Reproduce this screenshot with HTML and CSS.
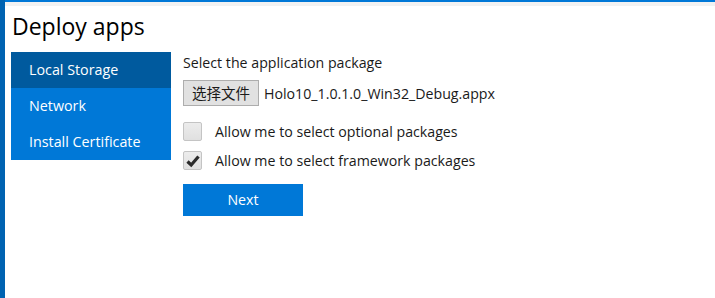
FILE: index.html
```html
<!DOCTYPE html>
<html>
<head>
<meta charset="utf-8">
<link rel="stylesheet" href="styles.css">
</head>
<body>
<div class="frame">
  <div class="leftbar"></div>
  <div class="main">
    <div class="topbar"></div>
    <div class="strip"></div>
    <h1 class="title">Deploy apps</h1>
    <div class="layout">
      <nav class="nav">
        <div class="nav-item active">Local Storage</div>
        <div class="nav-item">Network</div>
        <div class="nav-item">Install Certificate</div>
      </nav>
      <div class="content">
        <div class="label">Select the application package</div>
        <div class="file-row">
          <span class="file-btn">选择文件</span>
          <span class="file-name">Holo10_1.0.1.0_Win32_Debug.appx</span>
        </div>
        <div class="check-row first">
          <span class="box"></span>
          <span class="check-label">Allow me to select optional packages</span>
        </div>
        <div class="check-row">
          <span class="box checked">
            <svg width="14" height="14" viewBox="0 0 14 14"><path d="M1.5 7.5 L5.2 11 L12.5 2.5" fill="none" stroke="#2b2b2b" stroke-width="3.2" stroke-linejoin="miter"/></svg>
          </span>
          <span class="check-label">Allow me to select framework packages</span>
        </div>
        <div class="next-btn">Next</div>
      </div>
    </div>
  </div>
</div>
</body>
</html>
```
FILE: styles.css
```css
html, body {
  margin: 0;
  padding: 0;
  background: #ffffff;
}
body {
  font-family: "Open Sans", "Noto Sans CJK SC", sans-serif;
  color: #1a1a1a;
}
.frame {
  display: flex;
  height: 298px;
  overflow: hidden;
}
.leftbar {
  width: 5px;
  background: #0063b1;
  flex: none;
}
.main {
  flex: 1;
  display: flex;
  flex-direction: column;
}
.topbar {
  height: 2px;
  background: #0078d7;
}
.strip {
  height: 4px;
  background: #f2f2f2;
}
.title {
  margin: 0;
  padding: 4px 0 0 7px;
  height: 42px;
  font-size: 23px;
  font-weight: 400;
  line-height: 32px;
  color: #000;
}
.layout {
  display: flex;
  align-items: flex-start;
  padding-left: 6px;
  gap: 12px;
}
.nav {
  width: 160px;
  flex: none;
  background: #0078d7;
}
.nav-item {
  height: 36px;
  line-height: 36px;
  padding-left: 18px;
  color: #fff;
  font-size: 14.3px;
}
.nav-item.active {
  background: #005a9e;
}
.content {
  display: flex;
  flex-direction: column;
  align-items: flex-start;
  font-size: 14.2px;
}
.label {
  line-height: 20px;
  margin-top: 1px;
}
.file-row {
  display: flex;
  align-items: center;
  margin-top: 7px;
}
.file-btn {
  box-sizing: border-box;
  height: 26px;
  width: 76px;
  border: 1px solid #adadad;
  background: #e1e1e1;
  font-size: 14.5px;
  line-height: 24px;
  text-align: center;
  font-family: "Noto Sans CJK SC", sans-serif;
}
.file-name {
  margin-left: 5px;
}
.check-row {
  display: flex;
  align-items: center;
  margin-top: 10px;
}
.check-row.first {
  margin-top: 16px;
}
.box {
  box-sizing: border-box;
  width: 19px;
  height: 19px;
  border: 1px solid #c4c4c4;
  border-radius: 2px;
  background: linear-gradient(#ececec, #e0e0e0);
  display: flex;
  align-items: center;
  justify-content: center;
}
.check-label {
  margin-left: 13px;
}
.next-btn {
  margin-top: 14px;
  width: 120px;
  height: 32px;
  line-height: 32px;
  text-align: center;
  background: #0078d7;
  color: #fff;
}
```
